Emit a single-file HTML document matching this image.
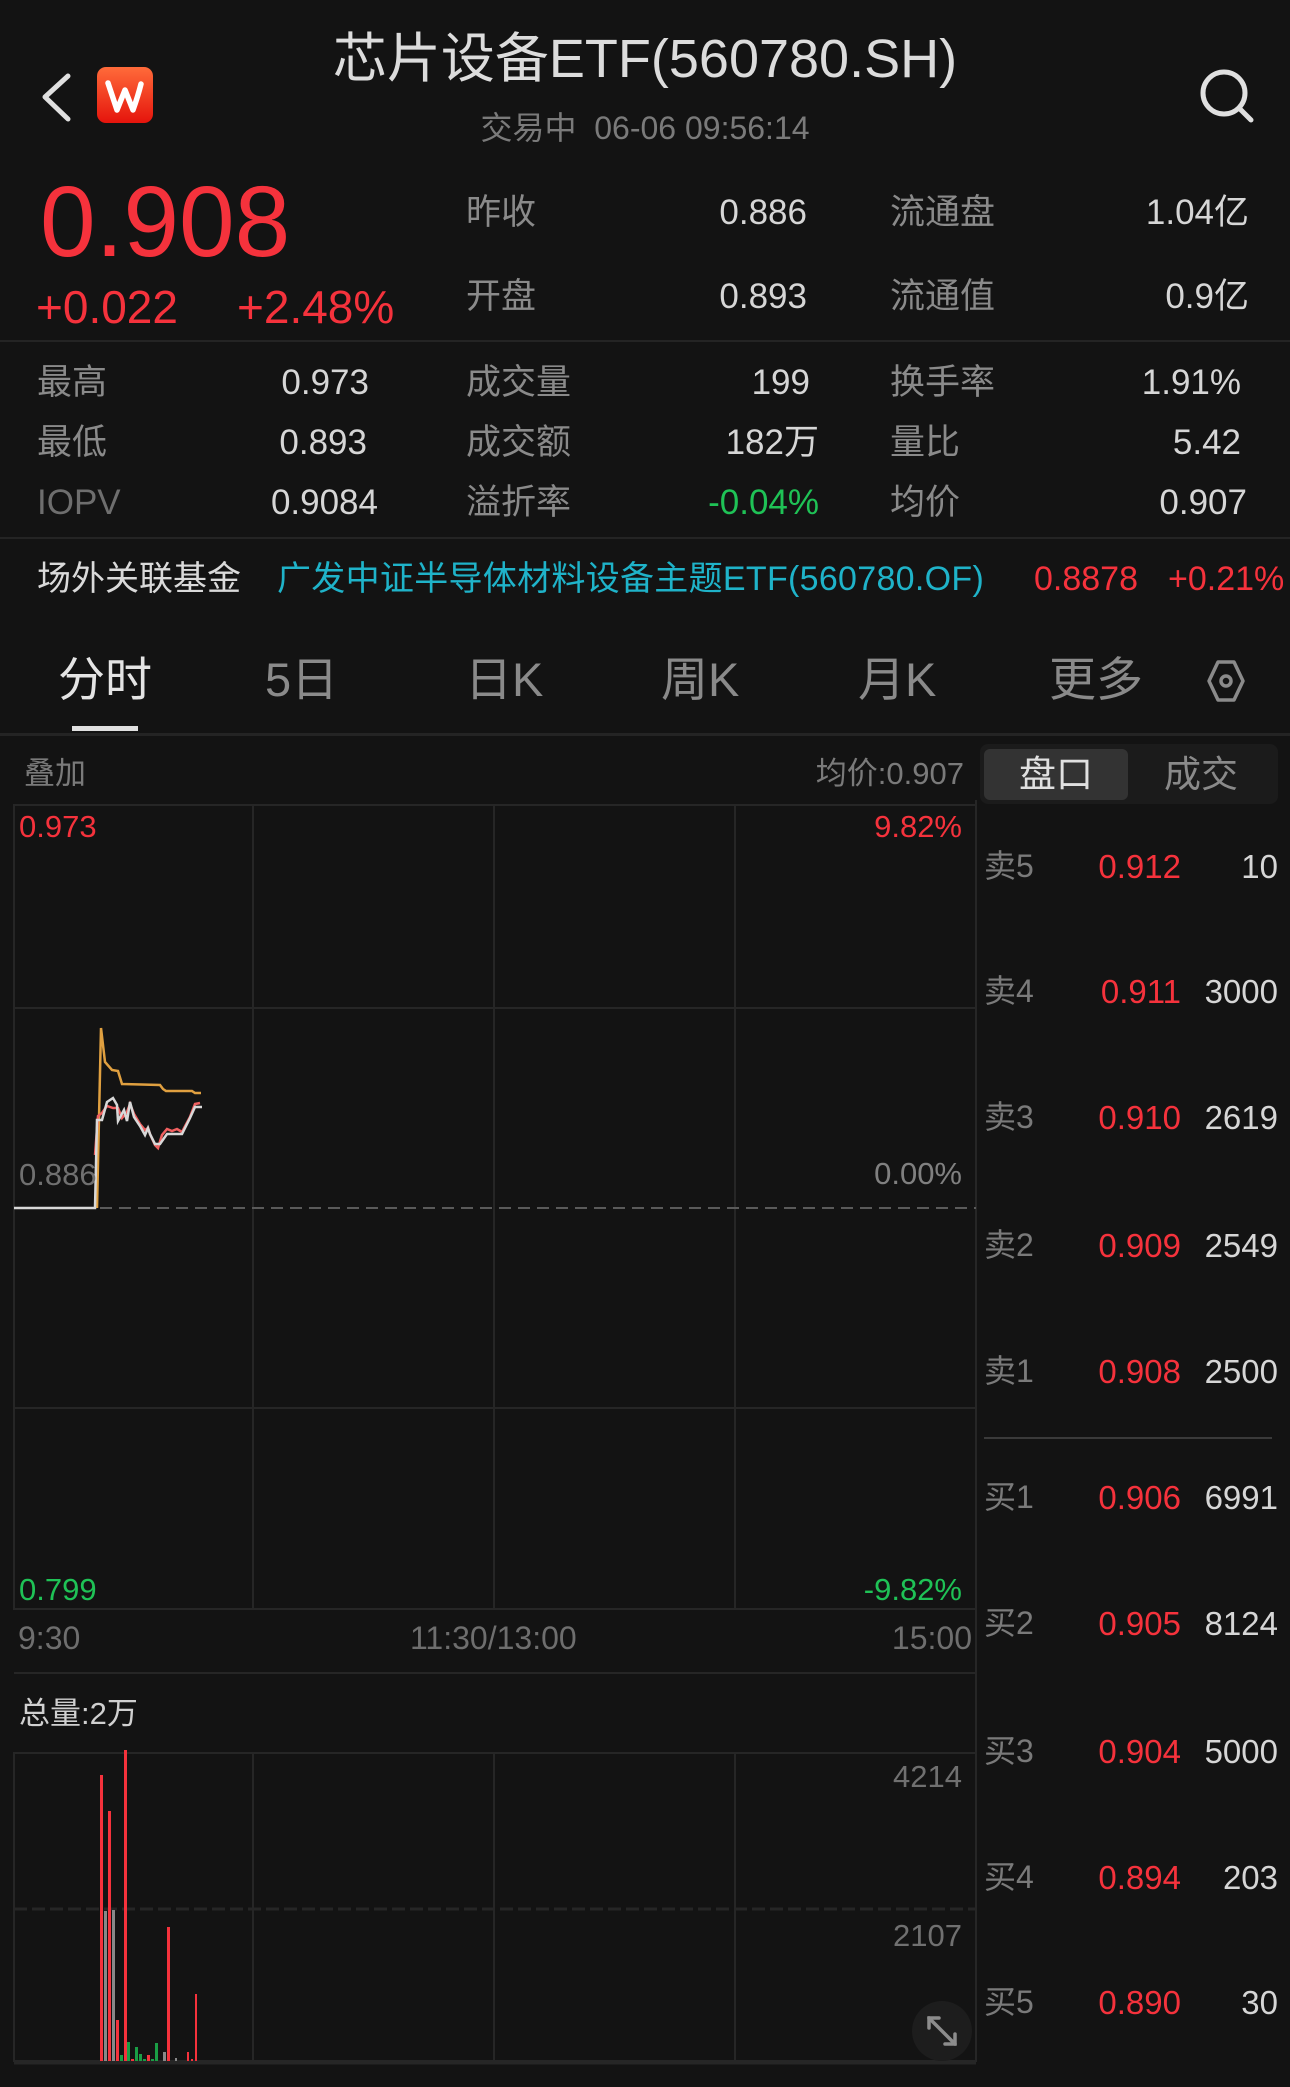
<!DOCTYPE html>
<html><head><meta charset="utf-8"><style>
*{margin:0;padding:0;box-sizing:border-box}
body{width:1290px;height:2087px;background:#131313;overflow:hidden;position:relative;font-family:"Liberation Sans","Noto Sans CJK SC",sans-serif;color:#d6d6d6}
.t{position:absolute;white-space:nowrap;line-height:1}
.r{text-align:right}
.lb{color:#8a8a8a}
.red{color:#f5323c}
.grn{color:#1fc256}
.hl{position:absolute;height:2px;background:#242424}
</style></head><body>
<svg style="position:absolute;left:0;top:0" width="1290" height="140">
<polyline points="68,76 45,97 68,119" fill="none" stroke="#e0e0e0" stroke-width="5" stroke-linecap="round" stroke-linejoin="round"/>
<defs><linearGradient id="g" x1="0" y1="0" x2="0" y2="1"><stop offset="0" stop-color="#ff6b3a"/><stop offset="1" stop-color="#e5140c"/></linearGradient></defs>
<rect x="97" y="67" width="56" height="56" rx="9" fill="url(#g)"/>
<path d="M108 83 L117 110 L125 90 L133 110 Q138 96 141 84" fill="none" stroke="#fff" stroke-width="5.5" stroke-linecap="round" stroke-linejoin="round"/>
<circle cx="1224" cy="93" r="21" fill="none" stroke="#e0e0e0" stroke-width="5"/>
<line x1="1239" y1="108" x2="1251" y2="120" stroke="#e0e0e0" stroke-width="5" stroke-linecap="round"/>
</svg>
<div class="t" style="left:0;width:1290px;text-align:center;top:32px;font-size:54px;color:#dcdcdc">芯片设备ETF(560780.SH)</div>
<div class="t" style="left:0;width:1290px;text-align:center;top:112px;font-size:32px;color:#7a7a7a">交易中&nbsp; 06-06 09:56:14</div>

<div class="t red" style="left:40px;top:172px;font-size:100px">0.908</div>
<div class="t red" style="left:36px;top:284px;font-size:46px">+0.022</div>
<div class="t red" style="left:237px;top:284px;font-size:46px">+2.48%</div>

<div class="t lb" style="left:466px;top:195px;font-size:35px">昨收</div>
<div class="t r" style="right:483px;top:195px;font-size:35px">0.886</div>
<div class="t lb" style="left:890px;top:195px;font-size:35px">流通盘</div>
<div class="t r" style="right:41px;top:195px;font-size:35px">1.04亿</div>
<div class="t lb" style="left:466px;top:279px;font-size:35px">开盘</div>
<div class="t r" style="right:483px;top:279px;font-size:35px">0.893</div>
<div class="t lb" style="left:890px;top:279px;font-size:35px">流通值</div>
<div class="t r" style="right:41px;top:279px;font-size:35px">0.9亿</div>
<div class="hl" style="left:0;width:1290px;top:340px"></div>

<div class="t lb" style="left:37px;top:365px;font-size:35px">最高</div>
<div class="t r" style="right:921px;top:365px;font-size:35px">0.973</div>
<div class="t lb" style="left:466px;top:365px;font-size:35px">成交量</div>
<div class="t r" style="right:480px;top:365px;font-size:35px">199</div>
<div class="t lb" style="left:890px;top:365px;font-size:35px">换手率</div>
<div class="t r" style="right:49px;top:365px;font-size:35px">1.91%</div>

<div class="t lb" style="left:37px;top:425px;font-size:35px">最低</div>
<div class="t r" style="right:923px;top:425px;font-size:35px">0.893</div>
<div class="t lb" style="left:466px;top:425px;font-size:35px">成交额</div>
<div class="t r" style="right:471px;top:425px;font-size:35px">182万</div>
<div class="t lb" style="left:890px;top:425px;font-size:35px">量比</div>
<div class="t r" style="right:49px;top:425px;font-size:35px">5.42</div>

<div class="t lb" style="left:37px;top:485px;font-size:35px;color:#6e6e6e">IOPV</div>
<div class="t r" style="right:912px;top:485px;font-size:35px">0.9084</div>
<div class="t lb" style="left:466px;top:485px;font-size:35px">溢折率</div>
<div class="t r grn" style="right:471px;top:485px;font-size:35px">-0.04%</div>
<div class="t lb" style="left:890px;top:485px;font-size:35px">均价</div>
<div class="t r" style="right:43px;top:485px;font-size:35px">0.907</div>
<div class="hl" style="left:0;width:1290px;top:537px"></div>

<div class="t" style="left:37px;top:562px;font-size:34px;color:#dadada">场外关联基金</div>
<div class="t" style="left:277px;top:562px;font-size:34px;color:#1fb3c9;letter-spacing:0.3px">广发中证半导体材料设备主题ETF(560780.OF)</div>
<div class="t red" style="left:1034px;top:562px;font-size:34px">0.8878</div>
<div class="t red" style="left:1168px;top:562px;font-size:34px">+0.21%</div>

<div class="t" style="left:58px;top:656px;font-size:47px;color:#e4e4e4">分时</div>
<div class="t lb" style="left:265px;top:656px;font-size:47px">5日</div>
<div class="t lb" style="left:465px;top:656px;font-size:47px">日K</div>
<div class="t lb" style="left:661px;top:656px;font-size:47px">周K</div>
<div class="t lb" style="left:858px;top:656px;font-size:47px">月K</div>
<div class="t lb" style="left:1049px;top:656px;font-size:47px">更多</div>
<svg style="position:absolute;left:1204px;top:659px" width="44" height="44"><polygon points="14,3 30,3 39,22 30,41 14,41 5,22" fill="none" stroke="#8a8a8a" stroke-width="3.5" stroke-linejoin="round"/><circle cx="22" cy="22" r="5" fill="none" stroke="#8a8a8a" stroke-width="3.5"/></svg>
<div style="position:absolute;left:72px;top:726px;width:66px;height:5px;background:#e0e0e0"></div>
<div class="hl" style="left:0;width:1290px;top:733px;height:3px"></div>

<div class="t lb" style="left:24px;top:758px;font-size:31px;color:#7a7a7a">叠加</div>
<div class="t r" style="right:326px;top:758px;font-size:31px;color:#7a7a7a">均价:0.907</div>
<div style="position:absolute;left:980px;top:744px;width:298px;height:60px;background:#1b1b1b;border-radius:8px"></div>
<div style="position:absolute;left:984px;top:749px;width:144px;height:51px;background:#333;border-radius:6px"></div>
<div class="t" style="left:984px;width:144px;text-align:center;top:756px;font-size:37px;color:#e0e0e0">盘口</div>
<div class="t lb" style="left:1128px;width:146px;text-align:center;top:756px;font-size:37px">成交</div>

<svg style="position:absolute;left:0;top:0" width="1290" height="2087">
<g stroke="#262626" stroke-width="2" fill="none">
<rect x="14" y="805" width="962" height="804"/>
<line x1="14" y1="1008" x2="976" y2="1008"/>
<line x1="14" y1="1408" x2="976" y2="1408"/>
<line x1="253" y1="805" x2="253" y2="1609"/>
<line x1="494" y1="805" x2="494" y2="1609"/>
<line x1="735" y1="805" x2="735" y2="1609"/>
<line x1="976" y1="800" x2="976" y2="2062"/>
<line x1="14" y1="1673" x2="976" y2="1673"/>
<rect x="14" y="1753" width="962" height="308"/>
<line x1="253" y1="1753" x2="253" y2="2061"/>
<line x1="494" y1="1753" x2="494" y2="2061"/>
<line x1="735" y1="1753" x2="735" y2="2061"/>
<line x1="14" y1="1909" x2="976" y2="1909" stroke-dasharray="13 5" stroke-width="3"/>
<line x1="14" y1="2063" x2="976" y2="2063" stroke-width="3"/>
</g>
<line x1="100" y1="1208" x2="976" y2="1208" stroke="#5a5a5a" stroke-width="2" stroke-dasharray="12 7"/>
<polyline points="97,1208 101,1028 105,1062 112,1070 118,1071 122,1084 160,1085 163,1089 166,1091 192,1091 195,1093 201,1093" fill="none" stroke="#e0a040" stroke-width="2.5"/>
<polyline points="95,1155 98,1116 102,1113 107,1106 113,1108 118,1108 122,1118 127,1112 130,1104 134,1114 140,1124 145,1130 148,1128 150,1134 155,1145 158,1148 162,1135 167,1129 172,1131 177,1129 182,1132 190,1117 195,1104 200,1103" fill="none" stroke="#f06060" stroke-width="2.5"/>
<polyline points="14,1208 95,1208 97,1120 102,1120 107,1102 113,1098 117,1105 118,1121 124,1110 127,1121 130,1102 134,1117 140,1126 145,1135 148,1128 150,1134 155,1144 160,1144 167,1134 182,1134 190,1118 195,1107 202,1107" fill="none" stroke="#d8d8d8" stroke-width="2.5"/>
<g>
<rect x="100" y="1775" width="3" height="286" fill="#f5323c"/>
<rect x="104" y="1911" width="3" height="150" fill="#888"/>
<rect x="108" y="1811" width="3" height="250" fill="#f5323c"/>
<rect x="112" y="1910" width="3" height="151" fill="#888"/>
<rect x="116" y="2020" width="3" height="41" fill="#f5323c"/>
<rect x="120" y="2055" width="3" height="6" fill="#1a9e45"/>
<rect x="124" y="1750" width="3" height="311" fill="#f5323c"/>
<rect x="127" y="2042" width="3" height="19" fill="#1a9e45"/>
<rect x="131" y="2059" width="3" height="2" fill="#f5323c"/>
<rect x="135" y="2047" width="3" height="14" fill="#1a9e45"/>
<rect x="139" y="2054" width="3" height="7" fill="#1a9e45"/>
<rect x="143" y="2059" width="3" height="2" fill="#1a9e45"/>
<rect x="147" y="2055" width="3" height="6" fill="#f5323c"/>
<rect x="151" y="2059" width="3" height="2" fill="#1a9e45"/>
<rect x="155" y="2043" width="3" height="18" fill="#1a9e45"/>
<rect x="163" y="2052" width="3" height="9" fill="#888"/>
<rect x="167" y="1927" width="3" height="134" fill="#f5323c"/>
<rect x="175" y="2058" width="2" height="3" fill="#888"/>
<rect x="187" y="2052" width="2" height="9" fill="#f5323c"/>
<rect x="191" y="2059" width="2" height="2" fill="#f5323c"/>
<rect x="195" y="1994" width="2" height="67" fill="#f5323c"/>
</g>
<circle cx="942" cy="2031" r="30" fill="#1d1d1d"/>
<g stroke="#8c8c8c" stroke-width="3.5" fill="none" stroke-linecap="round">
<line x1="929" y1="2018" x2="955" y2="2044"/>
<polyline points="929,2028 929,2018 939,2018"/>
<polyline points="945,2044 955,2044 955,2034"/>
</g>
<line x1="984" y1="1438" x2="1272" y2="1438" stroke="#3a3a3a" stroke-width="2"/>
</svg>
<div class="t red" style="left:19px;top:811px;font-size:31px">0.973</div>
<div class="t r red" style="right:328px;top:811px;font-size:31px">9.82%</div>
<div class="t" style="left:19px;top:1159px;font-size:31px;color:#707070">0.886</div>
<div class="t r" style="right:328px;top:1158px;font-size:31px;color:#808080">0.00%</div>
<div class="t grn" style="left:19px;top:1574px;font-size:31px">0.799</div>
<div class="t r grn" style="right:328px;top:1574px;font-size:31px">-9.82%</div>
<div class="t" style="left:18px;top:1622px;font-size:32px;color:#6e6e6e">9:30</div>
<div class="t" style="left:410px;top:1622px;font-size:32px;color:#6e6e6e">11:30/13:00</div>
<div class="t r" style="right:318px;top:1622px;font-size:32px;color:#6e6e6e">15:00</div>
<div class="t" style="left:19px;top:1698px;font-size:31px;color:#d0d0d0">总量:2万</div>
<div class="t r" style="right:328px;top:1761px;font-size:31px;color:#707070">4214</div>
<div class="t r" style="right:328px;top:1920px;font-size:31px;color:#707070">2107</div>

<div style="position:absolute;left:984px;top:0;width:296px">
<div class="t" style="left:0;top:850px;font-size:32px;color:#7a7a7a">卖5</div><div class="t r red" style="right:99px;top:850px;font-size:33px">0.912</div><div class="t r" style="right:2px;top:850px;font-size:33px">10</div>
<div class="t" style="left:0;top:975px;font-size:32px;color:#7a7a7a">卖4</div><div class="t r red" style="right:99px;top:975px;font-size:33px">0.911</div><div class="t r" style="right:2px;top:975px;font-size:33px">3000</div>
<div class="t" style="left:0;top:1101px;font-size:32px;color:#7a7a7a">卖3</div><div class="t r red" style="right:99px;top:1101px;font-size:33px">0.910</div><div class="t r" style="right:2px;top:1101px;font-size:33px">2619</div>
<div class="t" style="left:0;top:1229px;font-size:32px;color:#7a7a7a">卖2</div><div class="t r red" style="right:99px;top:1229px;font-size:33px">0.909</div><div class="t r" style="right:2px;top:1229px;font-size:33px">2549</div>
<div class="t" style="left:0;top:1355px;font-size:32px;color:#7a7a7a">卖1</div><div class="t r red" style="right:99px;top:1355px;font-size:33px">0.908</div><div class="t r" style="right:2px;top:1355px;font-size:33px">2500</div>
<div class="t" style="left:0;top:1481px;font-size:32px;color:#7a7a7a">买1</div><div class="t r red" style="right:99px;top:1481px;font-size:33px">0.906</div><div class="t r" style="right:2px;top:1481px;font-size:33px">6991</div>
<div class="t" style="left:0;top:1607px;font-size:32px;color:#7a7a7a">买2</div><div class="t r red" style="right:99px;top:1607px;font-size:33px">0.905</div><div class="t r" style="right:2px;top:1607px;font-size:33px">8124</div>
<div class="t" style="left:0;top:1735px;font-size:32px;color:#7a7a7a">买3</div><div class="t r red" style="right:99px;top:1735px;font-size:33px">0.904</div><div class="t r" style="right:2px;top:1735px;font-size:33px">5000</div>
<div class="t" style="left:0;top:1861px;font-size:32px;color:#7a7a7a">买4</div><div class="t r red" style="right:99px;top:1861px;font-size:33px">0.894</div><div class="t r" style="right:2px;top:1861px;font-size:33px">203</div>
<div class="t" style="left:0;top:1986px;font-size:32px;color:#7a7a7a">买5</div><div class="t r red" style="right:99px;top:1986px;font-size:33px">0.890</div><div class="t r" style="right:2px;top:1986px;font-size:33px">30</div>
</div>
</body></html>
